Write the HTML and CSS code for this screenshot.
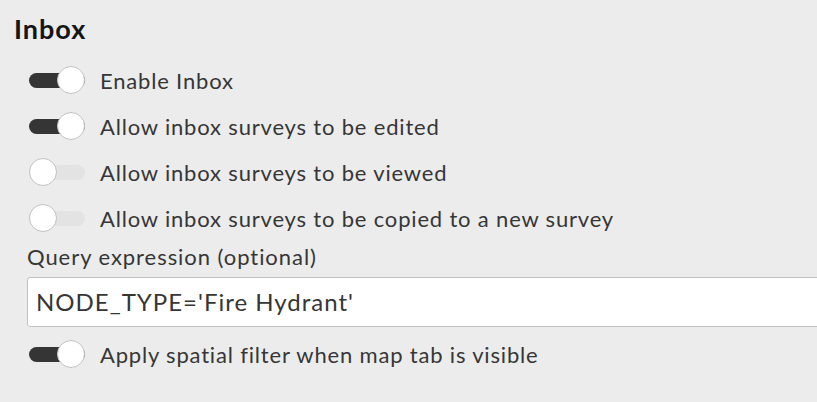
FILE: index.html
```html
<!DOCTYPE html>
<html lang="en">
<head>
<meta charset="utf-8">
<link rel="stylesheet" href="styles.css">
</head>
<body>
<section class="panel">
  <h2 class="title">Inbox</h2>
  <div class="toggle-row">
    <span class="switch on"><span class="knob"></span></span>
    <span class="label">Enable Inbox</span>
  </div>
  <div class="toggle-row">
    <span class="switch on"><span class="knob"></span></span>
    <span class="label">Allow inbox surveys to be edited</span>
  </div>
  <div class="toggle-row">
    <span class="switch"><span class="knob"></span></span>
    <span class="label">Allow inbox surveys to be viewed</span>
  </div>
  <div class="toggle-row">
    <span class="switch"><span class="knob"></span></span>
    <span class="label">Allow inbox surveys to be copied to a new survey</span>
  </div>
  <div class="field">
    <div class="field-label">Query expression (optional)</div>
    <div class="input">NODE_TYPE='Fire Hydrant'</div>
  </div>
  <div class="toggle-row">
    <span class="switch on"><span class="knob"></span></span>
    <span class="label">Apply spatial filter when map tab is visible</span>
  </div>
</section>
</body>
</html>
```
FILE: styles.css
```css
html, body {
  margin: 0;
  padding: 0;
  background: #ececec;
  overflow: hidden;
}
body {
  font-family: Lato, "Noto Sans", sans-serif;
  font-weight: 400;
  color: #363636;
  width: 817px;
  height: 402px;
}
.panel {
  padding: 12px 0 0 14px;
}
.title {
  margin: 0;
  font-size: 27px;
  font-weight: 700;
  letter-spacing: 1px;
  color: #151515;
  line-height: 34px;
  height: 45px;
}
.toggle-row {
  display: flex;
  align-items: center;
  height: 46px;
  padding-left: 15px;
}
.switch {
  position: relative;
  width: 56px;
  height: 15px;
  border-radius: 8px;
  background: #e3e3e3;
  flex: none;
}
.switch.on {
  background: #353535;
}
.knob {
  position: absolute;
  top: 50%;
  left: 0;
  width: 26px;
  height: 26px;
  margin-top: -14px;
  border: 1px solid #c2c2c2;
  border-radius: 50%;
  background: #fff;
}
.switch.on .knob {
  left: 28px;
}
.label {
  margin-left: 15px;
  font-size: 22px;
  letter-spacing: 0.82px;
}
.field {
  padding-left: 13px;
  padding-top: 1px;
}
.field-label {
  font-size: 22px;
  letter-spacing: 0.95px;
  line-height: 30px;
  height: 35px;
}
.input {
  box-sizing: border-box;
  width: 820px;
  height: 50px;
  border: 1px solid #c2c2c2;
  border-radius: 3px;
  background: #fff;
  padding-left: 8px;
  font-size: 24px;
  letter-spacing: 1px;
  line-height: 48px;
  color: #363636;
}
.field + .toggle-row {
  margin-top: 4px;
}
```
